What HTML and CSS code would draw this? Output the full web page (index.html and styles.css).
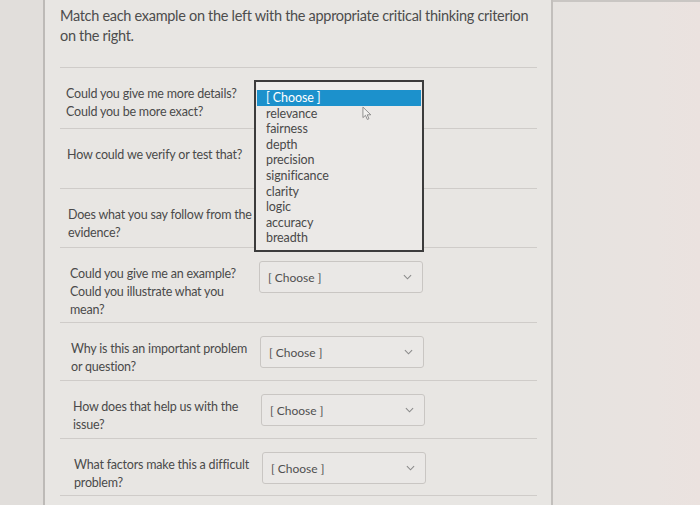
FILE: index.html
```html
<!DOCTYPE html>
<html lang="en">
<head>
<meta charset="utf-8">
<title>Matching question</title>
<link rel="stylesheet" href="styles.css">
</head>
<body>
<div class="page">
  <div class="card">
    <div class="title">Match each example on the left with the appropriate critical thinking criterion on the right.</div>
    <div class="rows">
      <div class="row">
        <div class="label">Could you give me more details? Could you be more exact?</div>
        <div class="select-wrap">
          <div class="select covered"><span>[ Choose ]</span><svg class="chev" viewBox="0 0 10 6" width="9" height="6"><path d="M1 1 L5 5 L9 1" fill="none" stroke="#8a8a8a" stroke-width="1.2"/></svg></div>
          <div class="listbox">
            <div class="lb-top"></div>
            <div class="opt sel">[ Choose ]</div>
            <div class="opt">relevance</div>
            <div class="opt">fairness</div>
            <div class="opt">depth</div>
            <div class="opt">precision</div>
            <div class="opt">significance</div>
            <div class="opt">clarity</div>
            <div class="opt">logic</div>
            <div class="opt">accuracy</div>
            <div class="opt">breadth</div>
            <svg class="cursor" viewBox="0 0 12 16" width="11" height="15"><path d="M1 1 L1 12.5 L3.8 10 L5.8 14.5 L7.6 13.7 L5.7 9.4 L9.6 9.4 Z" fill="#f2f1ef" stroke="#7d7d7d" stroke-width="0.9" stroke-linejoin="round"/></svg>
          </div>
        </div>
      </div>
      <div class="row">
        <div class="label">How could we verify or test that?</div>
        <div class="select-wrap">
          <div class="select covered"><span>[ Choose ]</span><svg class="chev" viewBox="0 0 10 6" width="9" height="6"><path d="M1 1 L5 5 L9 1" fill="none" stroke="#8a8a8a" stroke-width="1.2"/></svg></div>
        </div>
      </div>
      <div class="row">
        <div class="label">Does what you say follow from the evidence?</div>
        <div class="select-wrap">
          <div class="select covered"><span>[ Choose ]</span><svg class="chev" viewBox="0 0 10 6" width="9" height="6"><path d="M1 1 L5 5 L9 1" fill="none" stroke="#8a8a8a" stroke-width="1.2"/></svg></div>
        </div>
      </div>
      <div class="row">
        <div class="label">Could you give me an example? Could you illustrate what you mean?</div>
        <div class="select-wrap">
          <div class="select"><span>[ Choose ]</span><svg class="chev" viewBox="0 0 10 6" width="9" height="6"><path d="M1 1 L5 5 L9 1" fill="none" stroke="#8a8a8a" stroke-width="1.2"/></svg></div>
        </div>
      </div>
      <div class="row">
        <div class="label">Why is this an important problem or question?</div>
        <div class="select-wrap">
          <div class="select"><span>[ Choose ]</span><svg class="chev" viewBox="0 0 10 6" width="9" height="6"><path d="M1 1 L5 5 L9 1" fill="none" stroke="#8a8a8a" stroke-width="1.2"/></svg></div>
        </div>
      </div>
      <div class="row">
        <div class="label">How does that help us with the issue?</div>
        <div class="select-wrap">
          <div class="select"><span>[ Choose ]</span><svg class="chev" viewBox="0 0 10 6" width="9" height="6"><path d="M1 1 L5 5 L9 1" fill="none" stroke="#8a8a8a" stroke-width="1.2"/></svg></div>
        </div>
      </div>
      <div class="row">
        <div class="label">What factors make this a difficult problem?</div>
        <div class="select-wrap">
          <div class="select"><span>[ Choose ]</span><svg class="chev" viewBox="0 0 10 6" width="9" height="6"><path d="M1 1 L5 5 L9 1" fill="none" stroke="#8a8a8a" stroke-width="1.2"/></svg></div>
        </div>
      </div>
    </div>
  </div>
  <div class="side"></div>
</div>
</body>
</html>
```
FILE: styles.css
```css
* { box-sizing: border-box; }
html, body { margin: 0; padding: 0; }
body {
  width: 700px;
  height: 505px;
  overflow: hidden;
  background: #e1dedb;
  font-family: Lato, "Open Sans", sans-serif;
  color: #4a4a4a;
}
.page {
  display: flex;
  height: 505px;
  padding-left: 43px;
}
.card {
  width: 510px;
  height: 505px;
  background: #e8e6e3;
  border-left: 2px solid #bdbab7;
  border-right: 2px solid #c2bfbc;
  padding: 6px 14px 0 15px;
}
.side {
  flex: 1;
  background: linear-gradient(90deg, #e6e3e0 0%, #e9e3e0 70%, #ebe2df 100%);
  border-top: 2px solid #c9c6c3;
}
.title {
  font-size: 14.5px;
  line-height: 20px;
  color: #4d4d4d;
  letter-spacing: -0.3px;
  width: 480px;
}
.rows {
  margin-top: 21px;
  border-top: 1px solid #cfccc9;
}
.row {
  display: flex;
  align-items: flex-start;
  gap: 3px;
  padding: 13px 0 4px 6px;
  border-bottom: 1px solid #cfccc9;
  width: 477px;
}
.label {
  width: 190px;
  padding-top: 4px;
  font-size: 12.5px;
  line-height: 18px;
  letter-spacing: -0.2px;
  color: #4a4a4a;
}
.row:nth-child(1) { padding-bottom: 6px; }
.row:nth-child(2) { padding-bottom: 5px; padding-left: 7px; }
.row:nth-child(3) { padding-left: 8px; }
.row:nth-child(4) { padding-bottom: 3px; padding-left: 10px; }
.row:nth-child(5) { padding-bottom: 3px; padding-left: 11px; }
.row:nth-child(6) { padding-bottom: 3px; padding-left: 13px; }
.row:nth-child(7) { padding-bottom: 2px; padding-left: 14px; }
.row:nth-child(2) .label { width: 189px; }
.row:nth-child(3) .label { width: 188px; }
.row:nth-child(4) .label { width: 186px; }
.row:nth-child(5) .label { width: 186px; }
.row:nth-child(6) .label { width: 185px; }
.row:nth-child(7) .label { width: 185px; }
.select-wrap {
  position: relative;
  width: 164px;
  margin-bottom: 9px;
}
.select {
  height: 32px;
  border: 1px solid #c9c6c3;
  border-radius: 3px;
  background: #eae8e6;
  display: flex;
  align-items: center;
  justify-content: space-between;
  padding: 0 10px 0 8px;
  font-size: 12px;
  color: #505050;
}
.select.covered { visibility: hidden; }
.chev { display: block; }
.listbox {
  position: absolute;
  z-index: 10;
  left: -5px;
  top: -1px;
  width: 170px;
  height: 172px;
  border: 2px solid #3c3c3c;
  background: #ebe9e7;
  padding: 0 1px;
}
.lb-top {
  height: 8px;
  background: #efeeec;
}
.opt {
  height: 15.6px;
  line-height: 15.6px;
  padding-left: 9px;
  font-size: 12.5px;
  color: #4a4a4a;
  letter-spacing: -0.1px;
}
.opt.sel {
  background: #1c91cc;
  color: #ffffff;
}
.cursor {
  position: absolute;
  left: 106px;
  top: 24px;
}
```
